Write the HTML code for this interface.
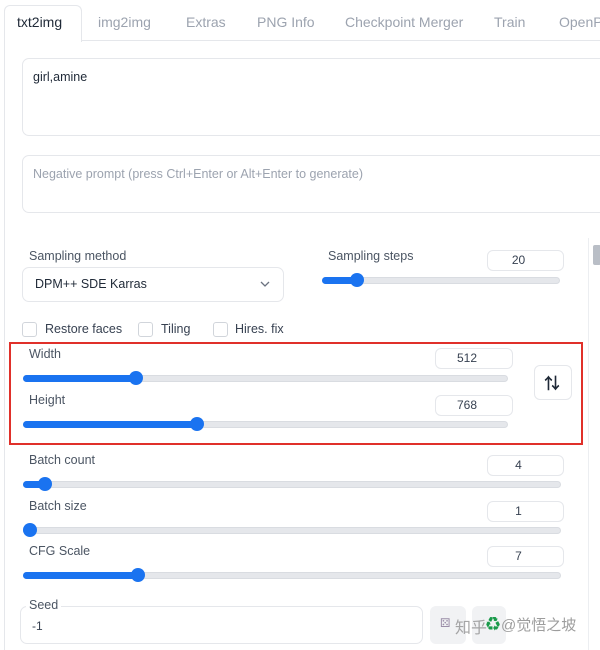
<!DOCTYPE html>
<html><head><meta charset="utf-8"><style>
*{box-sizing:border-box;margin:0;padding:0}
body{width:600px;height:650px;background:#fff;position:relative;overflow:hidden;font-family:"Liberation Sans","Noto Sans CJK SC",sans-serif;color:#374151}
.a{position:absolute}
.lbl{position:absolute;font-size:12.5px;color:#4b5563}
.box{position:absolute;border:1px solid #e5e7eb;border-radius:7px;background:#fff}
.num{position:absolute;border:1px solid #e5e7eb;border-radius:6px;background:#fff;font-size:12px;text-align:center;line-height:19px;color:#374151;height:21px;padding-right:14px}
.tr{position:absolute;height:7px;background:#e5e7eb;border:1px solid #d9dce1;border-radius:4px}
.fill{position:absolute;height:7px;background:#1a73f0;border-radius:4px}
.th{position:absolute;width:14px;height:14px;border-radius:50%;background:#1a73f0}
.cb{position:absolute;width:15px;height:15px;border:1px solid #d1d5db;border-radius:3px;background:#fff}
.tab{position:absolute;top:14px;font-size:14px;color:#9ca3af}
</style></head><body>
<div class="a" style="left:4px;top:5px;width:78px;height:37px;border:1px solid #e5e7eb;border-bottom:none;border-radius:6px 6px 0 0;background:#fff;z-index:2"></div>
<div class="a" style="left:4px;top:40px;width:600px;height:1px;background:#e5e7eb"></div>
<div class="a" style="left:4px;top:40px;width:1px;height:610px;background:#e5e7eb"></div>
<div class="tab" style="left:17px;color:#1f2937;z-index:3">txt2img</div>
<div class="tab" style="left:98px">img2img</div>
<div class="tab" style="left:186px">Extras</div>
<div class="tab" style="left:257px">PNG Info</div>
<div class="tab" style="left:345px">Checkpoint Merger</div>
<div class="tab" style="left:494px">Train</div>
<div class="tab" style="left:559px">OpenPose</div>

<div class="box" style="left:22px;top:58px;width:600px;height:78px"></div>
<div class="a" style="left:33px;top:70px;font-size:12.5px;color:#1f2937">girl,amine</div>
<div class="box" style="left:22px;top:155px;width:600px;height:58px"></div>
<div class="a" style="left:33px;top:167px;font-size:12.5px;color:#9ca3af">Negative prompt (press Ctrl+Enter or Alt+Enter to generate)</div>

<div class="a" style="left:588px;top:238px;width:1px;height:412px;background:#eceef1"></div>
<div class="a" style="left:593px;top:245px;width:8px;height:20px;background:#b9bec6;border-radius:2px"></div>

<div class="lbl" style="left:29px;top:249px">Sampling method</div>
<div class="box" style="left:22px;top:267px;width:262px;height:35px"></div>
<div class="a" style="left:35px;top:277px;font-size:12.5px;color:#1f2937">DPM++ SDE Karras</div>
<svg class="a" style="left:260px;top:280px" width="10" height="8"><path d="M1 2l4 4 4-4" fill="none" stroke="#6b7280" stroke-width="1.3"/></svg>

<div class="lbl" style="left:328px;top:249px">Sampling steps</div>
<div class="num" style="left:487px;top:250px;width:77px">20</div>
<div class="tr" style="left:322px;top:277px;width:238px"></div>
<div class="fill" style="left:322px;top:277px;width:35px"></div>
<div class="th" style="left:350px;top:273px"></div>

<div class="cb" style="left:22px;top:322px"></div><div class="lbl" style="left:45px;top:322px;color:#374151">Restore faces</div>
<div class="cb" style="left:138px;top:322px"></div><div class="lbl" style="left:161px;top:322px;color:#374151">Tiling</div>
<div class="cb" style="left:213px;top:322px"></div><div class="lbl" style="left:235px;top:322px;color:#374151">Hires. fix</div>

<div class="a" style="left:9px;top:342px;width:574px;height:103px;border:2px solid #e0302a"></div>
<div class="lbl" style="left:29px;top:347px">Width</div>
<div class="num" style="left:435px;top:348px;width:78px">512</div>
<div class="tr" style="left:23px;top:375px;width:485px"></div>
<div class="fill" style="left:23px;top:375px;width:113px"></div>
<div class="th" style="left:129px;top:371px"></div>
<div class="box" style="left:534px;top:365px;width:38px;height:35px;border-radius:6px"></div>
<div class="a" style="left:544px;top:370px;font-size:16px;font-weight:bold;color:#1f2937">⇅</div>
<div class="lbl" style="left:29px;top:393px">Height</div>
<div class="num" style="left:435px;top:395px;width:78px">768</div>
<div class="tr" style="left:23px;top:421px;width:485px"></div>
<div class="fill" style="left:23px;top:421px;width:174px"></div>
<div class="th" style="left:190px;top:417px"></div>

<div class="lbl" style="left:29px;top:453px">Batch count</div>
<div class="num" style="left:487px;top:455px;width:77px">4</div>
<div class="tr" style="left:23px;top:481px;width:538px"></div>
<div class="fill" style="left:23px;top:481px;width:22px"></div>
<div class="th" style="left:38px;top:477px"></div>

<div class="lbl" style="left:29px;top:499px">Batch size</div>
<div class="num" style="left:487px;top:501px;width:77px">1</div>
<div class="tr" style="left:23px;top:527px;width:538px"></div>
<div class="th" style="left:23px;top:523px"></div>

<div class="lbl" style="left:29px;top:544px">CFG Scale</div>
<div class="num" style="left:487px;top:546px;width:77px">7</div>
<div class="tr" style="left:23px;top:572px;width:538px"></div>
<div class="fill" style="left:23px;top:572px;width:115px"></div>
<div class="th" style="left:131px;top:568px"></div>

<div class="box" style="left:20px;top:606px;width:403px;height:38px"></div>
<div class="lbl" style="left:26px;top:598px;background:#fff;padding:0 3px">Seed</div>
<div class="a" style="left:32px;top:619px;font-size:12px;color:#374151">-1</div>
<div class="a" style="left:430px;top:606px;width:36px;height:38px;background:#f1f2f4;border-radius:6px"></div>
<div class="a" style="left:472px;top:606px;width:34px;height:38px;background:#f1f2f4;border-radius:6px"></div>
<div class="a" style="left:440px;top:616px;font-size:12px;color:#9b8ea8">⚄</div>
<div class="a" style="left:455px;top:614px;font-size:16px;color:rgba(150,150,150,0.85)">知乎</div>
<div class="a" style="left:486px;top:614px;font-size:14px;color:#1a9a4a">♻</div>
<div class="a" style="left:501px;top:614px;font-size:15px;color:rgba(140,140,140,0.85)">@觉悟之坡</div>
</body></html>
